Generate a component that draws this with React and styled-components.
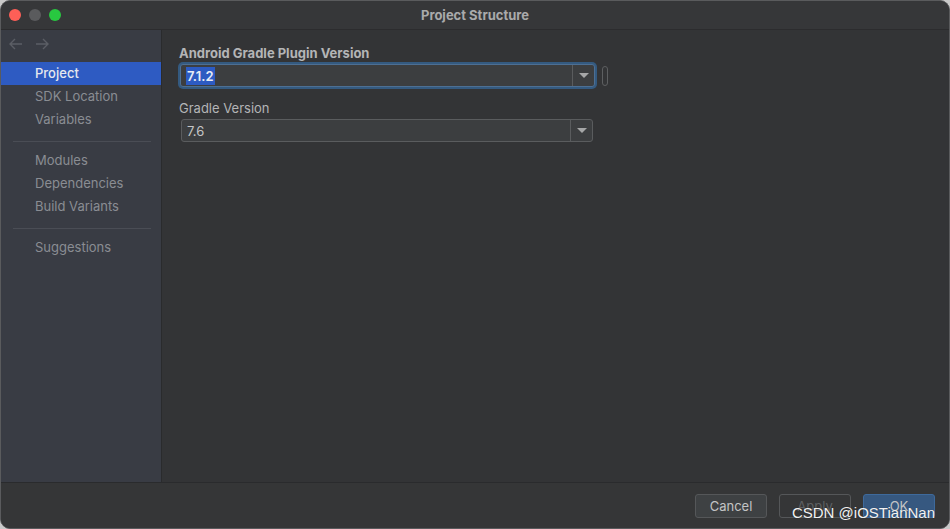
import React from "react";
import styled, { createGlobalStyle } from "styled-components";

const Global = createGlobalStyle`
  html, body { margin: 0; padding: 0; background: #c9c9c9; }
  body { font-family: "Inter", "Liberation Sans", sans-serif; }
`;

const Window = styled.div`
  position: relative;
  width: 950px;
  height: 529px;
  box-sizing: border-box;
  border: 1px solid #5a5b5d;
  border-radius: 10px;
  overflow: hidden;
  background: #333436;
  display: flex;
  flex-direction: column;
`;

const TitleBar = styled.div`
  height: 28px;
  flex: none;
  display: flex;
  align-items: center;
  position: relative;
  background: #363739;
  border-bottom: 1px solid #2c2c2e;
`;

const Lights = styled.div`
  display: flex;
  gap: 8px;
  padding-left: 8px;
`;

const Light = styled.span`
  width: 12px;
  height: 12px;
  border-radius: 50%;
  background: ${(p) => p.color};
`;

const Title = styled.div`
  position: absolute;
  left: 0;
  right: 0;
  text-align: center;
  font-size: 13px;
  font-weight: 700;
  color: #a9aaab;
  pointer-events: none;
`;

const Body = styled.div`
  flex: 1;
  display: flex;
  min-height: 0;
`;

const Sidebar = styled.div`
  width: 160px;
  flex: none;
  background: #393c44;
  border-right: 1px solid #2a2b2d;
  display: flex;
  flex-direction: column;
`;

const NavArrows = styled.div`
  display: flex;
  gap: 10px;
  padding: 7px 0 0 7px;
  height: 32px;
  box-sizing: border-box;
  color: #5b5e65;
`;

const Item = styled.div`
  height: 23px;
  line-height: 23px;
  padding-left: 34px;
  font-size: 13px;
  color: ${(p) => (p.$active ? "#e6e8ee" : "#8a8d93")};
  background: ${(p) => (p.$active ? "#2e5bc2" : "transparent")};
  font-weight: ${(p) => (p.$active ? 500 : 400)};
`;

const Separator = styled.div`
  height: 1px;
  margin: 10px 10px 7px 12px;
  background: #4a4d55;
`;

const Main = styled.div`
  flex: 1;
  padding: 15px 0 0 16px;
  display: flex;
  flex-direction: column;
`;

const Label = styled.div`
  font-size: 13px;
  color: #b4b5b6;
  font-weight: ${(p) => (p.$bold ? 700 : 400)};
  margin-bottom: ${(p) => (p.$bold ? 3 : 3)}px;
  padding-left: 1px;
`;

const Field = styled.div`
  display: flex;
  align-items: center;
  gap: 6px;
  margin-bottom: ${(p) => p.$gap || 0}px;
`;

const Combo = styled.div`
  width: ${(p) => p.$w}px;
  height: 21px;
  margin-left: ${(p) => (p.$focus ? 2 : 3)}px;
  display: flex;
  align-items: stretch;
  background: #3c3e40;
  border: 1px solid ${(p) => (p.$focus ? "#4d6f93" : "#5a5c5e")};
  border-radius: 3px;
  box-shadow: ${(p) => (p.$focus ? "0 0 0 2px #345a80" : "none")};
`;

const ComboText = styled.div`
  flex: 1;
  display: flex;
  align-items: center;
  padding-left: 5px;
  font-size: 13px;
  color: #c5c6c7;
`;

const Selected = styled.span`
  background: #2d5bc2;
  color: #e8ecf5;
  font-weight: 600;
  padding: 1px 1px;
`;

const Arrow = styled.div`
  width: 21px;
  border-left: 1px solid #5a5c5e;
  display: flex;
  align-items: center;
  justify-content: center;
  &::after {
    content: "";
    border-left: 5px solid transparent;
    border-right: 5px solid transparent;
    border-top: 5px solid #a6a7a8;
  }
`;

const Pill = styled.div`
  width: 4px;
  height: 18px;
  border: 1px solid #5d5f61;
  border-radius: 3px;
  margin-left: 1px;
`;

const Footer = styled.div`
  height: 46px;
  flex: none;
  border-top: 1px solid #2a2b2d;
  background: #353637;
  display: flex;
  justify-content: flex-end;
  align-items: center;
  gap: 12px;
  padding: 0 14px 0 0;
  box-sizing: border-box;
  position: relative;
`;

const Button = styled.div`
  width: 72px;
  height: 24px;
  box-sizing: border-box;
  border-radius: 3px;
  display: flex;
  align-items: center;
  justify-content: center;
  font-size: 13px;
  color: ${(p) => (p.$variant === "disabled" ? "#5e6062" : "#c3c4c5")};
  background: ${(p) =>
    p.$variant === "primary" ? "#365880" : p.$variant === "disabled" ? "transparent" : "#3e4143"};
  border: 1px solid
    ${(p) => (p.$variant === "primary" ? "#3e6a9c" : "#555759")};
`;

const Watermark = styled.div`
  position: absolute;
  right: 14px;
  bottom: 7px;
  font-family: "Liberation Sans", sans-serif;
  font-size: 15px;
  color: #f2f2f2;
  text-shadow: 0 0 1px rgba(0, 0, 0, 0.4);
`;

const ArrowIcon = ({ dir }) => (
  <svg width="16" height="14" viewBox="0 0 16 14" fill="none" stroke="currentColor" strokeWidth="1.4">
    {dir === "left" ? (
      <path d="M14 7H2M7 2L2 7l5 5" />
    ) : (
      <path d="M2 7h12M9 2l5 5-5 5" />
    )}
  </svg>
);

const groups = [
  ["Project", "SDK Location", "Variables"],
  ["Modules", "Dependencies", "Build Variants"],
  ["Suggestions"],
];

export default function App() {
  return (
    <>
      <Global />
      <Window>
        <TitleBar>
          <Lights>
            <Light color="#fe5f57" />
            <Light color="#5a5b5d" />
            <Light color="#28c840" />
          </Lights>
          <Title>Project Structure</Title>
        </TitleBar>
        <Body>
          <Sidebar>
            <NavArrows>
              <ArrowIcon dir="left" />
              <ArrowIcon dir="right" />
            </NavArrows>
            {groups.map((g, i) => (
              <React.Fragment key={i}>
                {i > 0 && <Separator />}
                {g.map((name) => (
                  <Item key={name} $active={name === "Project"}>
                    {name}
                  </Item>
                ))}
              </React.Fragment>
            ))}
          </Sidebar>
          <Main>
            <Label $bold>Android Gradle Plugin Version</Label>
            <Field $gap={13}>
              <Combo $w={413} $focus>
                <ComboText>
                  <Selected>7.1.2</Selected>
                </ComboText>
                <Arrow />
              </Combo>
              <Pill />
            </Field>
            <Label>Gradle Version</Label>
            <Field>
              <Combo $w={410}>
                <ComboText>7.6</ComboText>
                <Arrow />
              </Combo>
            </Field>
          </Main>
        </Body>
        <Footer>
          <Button>Cancel</Button>
          <Button $variant="disabled">Apply</Button>
          <Button $variant="primary">OK</Button>
          <Watermark>CSDN @iOSTianNan</Watermark>
        </Footer>
      </Window>
    </>
  );
}
